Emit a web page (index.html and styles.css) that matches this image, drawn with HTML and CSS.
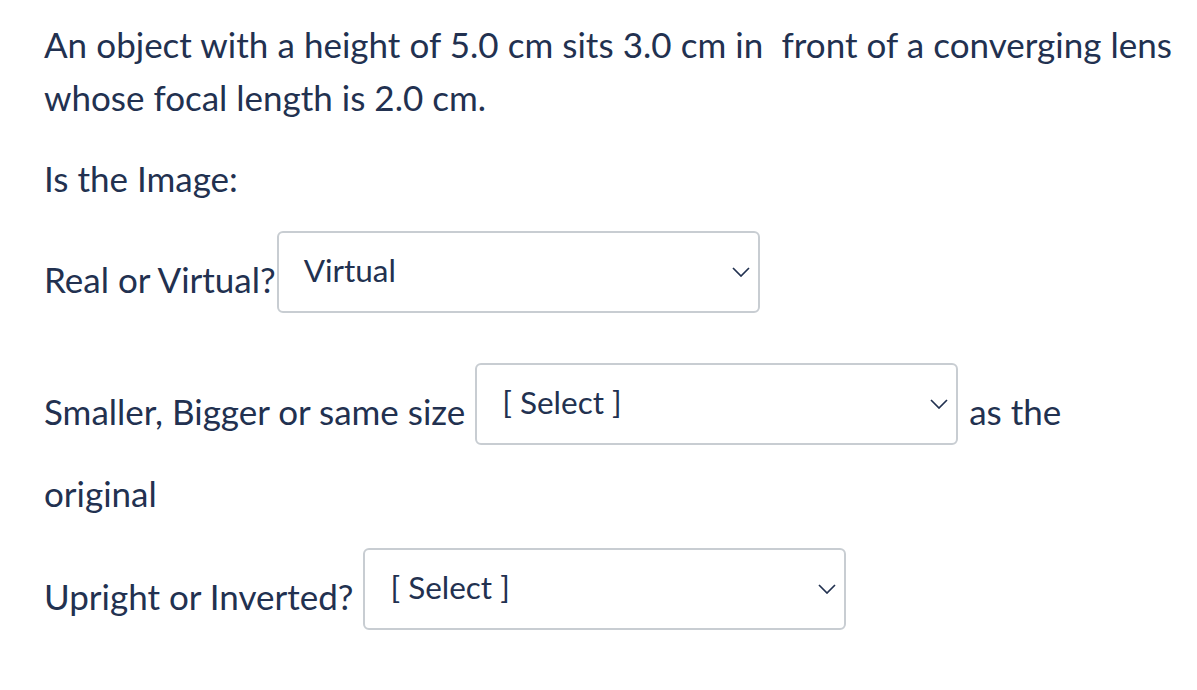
FILE: index.html
```html
<!DOCTYPE html>
<html lang="en">
<head>
<meta charset="utf-8">
<title>Quiz question</title>
<link rel="stylesheet" href="styles.css">
</head>
<body>
<div class="question">
  <p class="stem">An object with a height of 5.0 cm sits 3.0 cm in&nbsp; front of a converging lens whose focal length is 2.0 cm.</p>
  <p class="lead">Is the Image:</p>
  <p class="row">Real or Virtual?<span class="select"><span class="select-inner"><span class="value">Virtual</span><svg class="chev" viewBox="0 0 18 10" aria-hidden="true"><path d="M1 1 L9 9 L17 1"/></svg></span></span></p>
  <p class="row">Smaller, Bigger or same size <span class="select"><span class="select-inner"><span class="value">[ Select ]</span><svg class="chev" viewBox="0 0 18 10" aria-hidden="true"><path d="M1 1 L9 9 L17 1"/></svg></span></span> as the original</p>
  <p class="row">Upright or Inverted? <span class="select"><span class="select-inner"><span class="value">[ Select ]</span><svg class="chev" viewBox="0 0 18 10" aria-hidden="true"><path d="M1 1 L9 9 L17 1"/></svg></span></span></p>
</div>
</body>
</html>
```

FILE: styles.css
```css
html, body {
  margin: 0;
  padding: 0;
  background: #ffffff;
}

body {
  font-family: Lato, "Open Sans", "Liberation Sans", sans-serif;
  color: #223150;
  font-size: 35px;
  line-height: 53px;
}

.question {
  padding: 18px 0 0 44px;
  width: 1128px;
}

.question p {
  margin: 0 0 28px 0;
}

.stem {
  text-align: justify;
}

.question .lead {
  margin-bottom: 26px;
}

.row {
  text-align: left;
}

.select {
  display: inline-block;
  box-sizing: border-box;
  width: 483px;
  height: 82px;
  border: 2px solid #c8cdd2;
  border-radius: 6px;
  background: #fff;
  overflow: hidden;
  vertical-align: -42px;
  margin: 0 2px 22px 1px;
}

.select-inner {
  display: flex;
  align-items: center;
  justify-content: space-between;
  height: 100%;
  padding: 0 8px 0 25px;
}

.value {
  font-size: 31.5px;
  line-height: 1;
  padding-bottom: 2px;
  white-space: nowrap;
}

.chev {
  flex: none;
  width: 18px;
  height: 10px;
  fill: none;
  stroke: #223150;
  stroke-width: 1.7;
}
```
